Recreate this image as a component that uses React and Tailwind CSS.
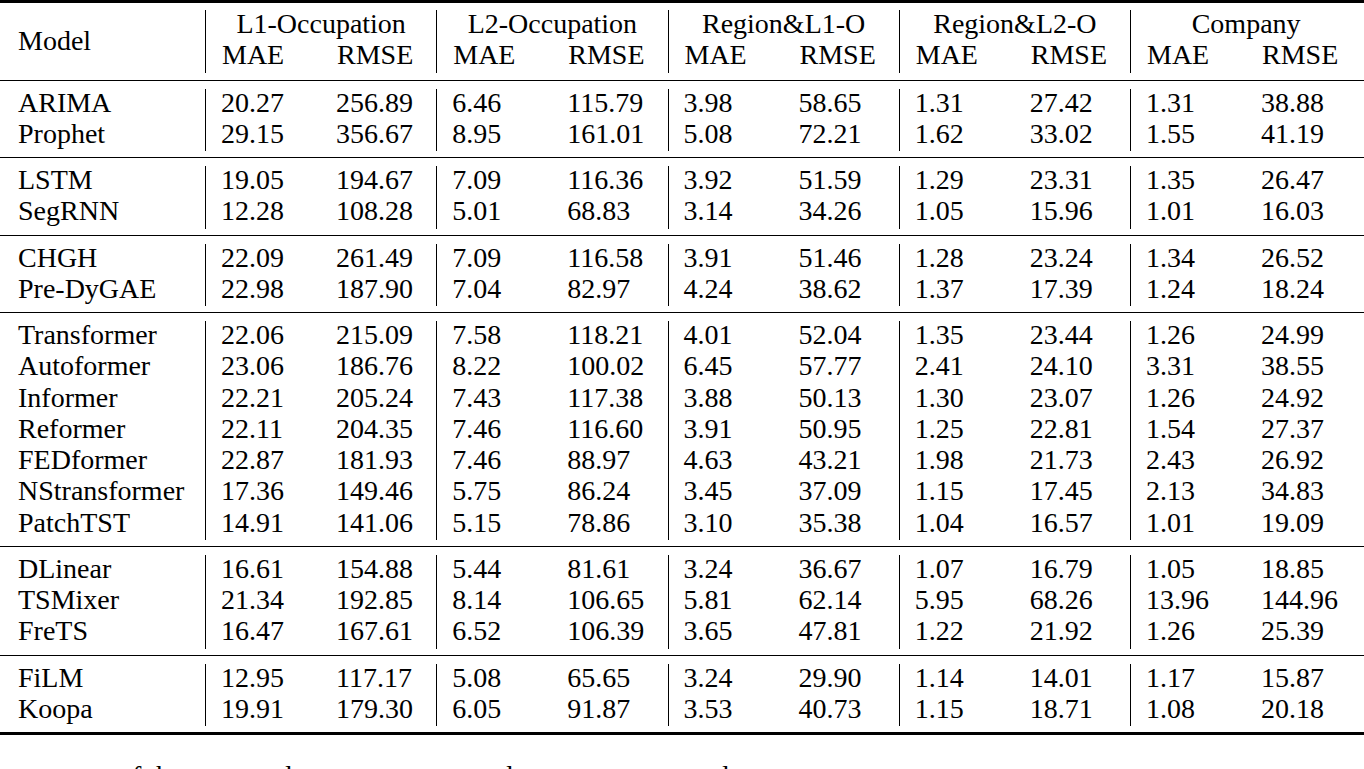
const groups = [
  [
    ['ARIMA', '20.27', '256.89', '6.46', '115.79', '3.98', '58.65', '1.31', '27.42', '1.31', '38.88'],
    ['Prophet', '29.15', '356.67', '8.95', '161.01', '5.08', '72.21', '1.62', '33.02', '1.55', '41.19'],
  ],
  [
    ['LSTM', '19.05', '194.67', '7.09', '116.36', '3.92', '51.59', '1.29', '23.31', '1.35', '26.47'],
    ['SegRNN', '12.28', '108.28', '5.01', '68.83', '3.14', '34.26', '1.05', '15.96', '1.01', '16.03'],
  ],
  [
    ['CHGH', '22.09', '261.49', '7.09', '116.58', '3.91', '51.46', '1.28', '23.24', '1.34', '26.52'],
    ['Pre-DyGAE', '22.98', '187.90', '7.04', '82.97', '4.24', '38.62', '1.37', '17.39', '1.24', '18.24'],
  ],
  [
    ['Transformer', '22.06', '215.09', '7.58', '118.21', '4.01', '52.04', '1.35', '23.44', '1.26', '24.99'],
    ['Autoformer', '23.06', '186.76', '8.22', '100.02', '6.45', '57.77', '2.41', '24.10', '3.31', '38.55'],
    ['Informer', '22.21', '205.24', '7.43', '117.38', '3.88', '50.13', '1.30', '23.07', '1.26', '24.92'],
    ['Reformer', '22.11', '204.35', '7.46', '116.60', '3.91', '50.95', '1.25', '22.81', '1.54', '27.37'],
    ['FEDformer', '22.87', '181.93', '7.46', '88.97', '4.63', '43.21', '1.98', '21.73', '2.43', '26.92'],
    ['NStransformer', '17.36', '149.46', '5.75', '86.24', '3.45', '37.09', '1.15', '17.45', '2.13', '34.83'],
    ['PatchTST', '14.91', '141.06', '5.15', '78.86', '3.10', '35.38', '1.04', '16.57', '1.01', '19.09'],
  ],
  [
    ['DLinear', '16.61', '154.88', '5.44', '81.61', '3.24', '36.67', '1.07', '16.79', '1.05', '18.85'],
    ['TSMixer', '21.34', '192.85', '8.14', '106.65', '5.81', '62.14', '5.95', '68.26', '13.96', '144.96'],
    ['FreTS', '16.47', '167.61', '6.52', '106.39', '3.65', '47.81', '1.22', '21.92', '1.26', '25.39'],
  ],
  [
    ['FiLM', '12.95', '117.17', '5.08', '65.65', '3.24', '29.90', '1.14', '14.01', '1.17', '15.87'],
    ['Koopa', '19.91', '179.30', '6.05', '91.87', '3.53', '40.73', '1.15', '18.71', '1.08', '20.18'],
  ],
];

const datasets = ['L1-Occupation', 'L2-Occupation', 'Region&L1-O', 'Region&L2-O', 'Company'];

function Cell({ children }) {
  return <div className="h-[31.25px] leading-[28px] whitespace-nowrap">{children}</div>;
}

function Group({ rows }) {
  return (
    <div className="flex pt-[8px] pb-[6px]">
      <div className="w-[205px] pl-[18px]">
        {rows.map((r) => (
          <Cell key={r[0]}>{r[0]}</Cell>
        ))}
      </div>
      {datasets.map((d, i) => (
        <div key={d} className="w-[231.25px] border-l border-black grid grid-cols-[115px_1fr]">
          <div className="pl-[15px]">
            {rows.map((r) => (
              <Cell key={r[0]}>{r[1 + i * 2]}</Cell>
            ))}
          </div>
          <div className="pl-[15px]">
            {rows.map((r) => (
              <Cell key={r[0]}>{r[2 + i * 2]}</Cell>
            ))}
          </div>
        </div>
      ))}
    </div>
  );
}

export default function App() {
  return (
    <div className="w-full min-h-screen bg-white text-black text-[28px] [font-family:'Liberation_Serif','Times_New_Roman',serif] overflow-hidden">
      <div className="h-[2.5px] bg-black" />

      {/* header */}
      <div className="flex pt-[7.5px] pb-[7px]">
        <div className="w-[205px] pl-[18px] flex items-center">
          <span className="leading-[28px]">Model</span>
        </div>
        {datasets.map((d) => (
          <div key={d} className="w-[231.25px] border-l border-black">
            <Cell>
              <div className="text-center">{d}</div>
            </Cell>
            <div className="grid grid-cols-[115px_1fr]">
              <div className="pl-[16px]">
                <Cell>MAE</Cell>
              </div>
              <div className="pl-[16px]">
                <Cell>RMSE</Cell>
              </div>
            </div>
          </div>
        ))}
      </div>

      {groups.map((rows, gi) => (
        <div key={gi}>
          <div className="h-px bg-black" />
          <Group rows={rows} />
        </div>
      ))}

      <div className="h-[2.5px] bg-black" />

      <p className="mt-[27px] pl-[13px] leading-[28px] whitespace-nowrap">
        averages of the proposed measures at most datasets are reported</p>
    </div>
  );
}
